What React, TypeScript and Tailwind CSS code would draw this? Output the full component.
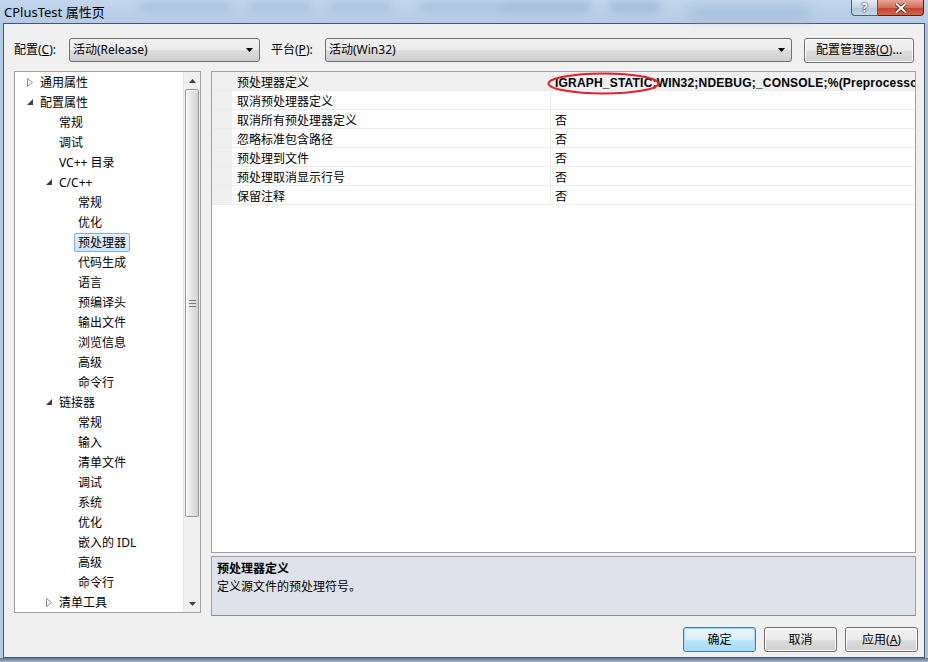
import React from "react";

const FONT = { fontFamily: '"Noto Sans","Noto Sans CJK SC",sans-serif' };

type Node = { label: string; level: number; arrow?: "open" | "closed"; selected?: boolean };

const tree: Node[] = [
  { label: "通用属性", level: 0, arrow: "closed" },
  { label: "配置属性", level: 0, arrow: "open" },
  { label: "常规", level: 1 },
  { label: "调试", level: 1 },
  { label: "VC++ 目录", level: 1 },
  { label: "C/C++", level: 1, arrow: "open" },
  { label: "常规", level: 2 },
  { label: "优化", level: 2 },
  { label: "预处理器", level: 2, selected: true },
  { label: "代码生成", level: 2 },
  { label: "语言", level: 2 },
  { label: "预编译头", level: 2 },
  { label: "输出文件", level: 2 },
  { label: "浏览信息", level: 2 },
  { label: "高级", level: 2 },
  { label: "命令行", level: 2 },
  { label: "链接器", level: 1, arrow: "open" },
  { label: "常规", level: 2 },
  { label: "输入", level: 2 },
  { label: "清单文件", level: 2 },
  { label: "调试", level: 2 },
  { label: "系统", level: 2 },
  { label: "优化", level: 2 },
  { label: "嵌入的 IDL", level: 2 },
  { label: "高级", level: 2 },
  { label: "命令行", level: 2 },
  { label: "清单工具", level: 1, arrow: "closed" },
];

const props: [string, string][] = [
  ["预处理器定义", "IGRAPH_STATIC;WIN32;NDEBUG;_CONSOLE;%(PreprocessorDefinitions)"],
  ["取消预处理器定义", ""],
  ["取消所有预处理器定义", "否"],
  ["忽略标准包含路径", "否"],
  ["预处理到文件", "否"],
  ["预处理取消显示行号", "否"],
  ["保留注释", "否"],
];

function DropArrow() {
  return (
    <svg width="7" height="4" viewBox="0 0 7 4">
      <path d="M0 0H7L3.5 4Z" fill="#000" />
    </svg>
  );
}

function Combo({ w, text }: { w: string; text: string }) {
  return (
    <div
      className={`${w} h-[24px] flex items-center justify-between rounded-[3px] border border-[#707070] pl-[3px] pr-[6px] bg-[linear-gradient(#f2f2f2_0%,#ebebeb_50%,#dddddd_51%,#cfcfcf_100%)]`}
    >
      <span>{text}</span>
      <DropArrow />
    </div>
  );
}

function Btn({ children, def, w }: { children: React.ReactNode; def?: boolean; w: string }) {
  return (
    <div
      className={`${w} h-[25px] flex items-center justify-center rounded-[3px] border ${
        def
          ? "border-[#3c7fb1] shadow-[inset_0_0_0_1px_#a9d9f5,inset_0_0_2px_1px_#bfe5fb] bg-[linear-gradient(#eaf6fd_0%,#d9f0fc_50%,#bee6fd_51%,#a7d9f5_100%)]"
          : "border-[#707070] bg-[linear-gradient(#f2f2f2_0%,#ebebeb_50%,#dddddd_51%,#cfcfcf_100%)] shadow-[inset_0_0_0_1px_#fcfcfc]"
      }`}
    >
      {children}
    </div>
  );
}

function TreeArrow({ kind }: { kind: "open" | "closed" }) {
  if (kind === "closed")
    return (
      <svg width="6" height="9" viewBox="0 0 6 9">
        <path d="M0.5 0.5L5.5 4.5L0.5 8.5Z" fill="#fff" stroke="#8c8c8c" strokeWidth="1" />
      </svg>
    );
  return (
    <svg width="6" height="6" viewBox="0 0 6 6">
      <path d="M6 0V6H0Z" fill="#3d3d3d" />
    </svg>
  );
}

function ScrollBar() {
  return (
    <div className="w-[17px] h-full flex flex-col bg-[#f0f0f0] border-l border-[#e5e5e5]">
      <div className="h-[17px] flex items-center justify-center">
        <svg width="7" height="4" viewBox="0 0 7 4">
          <path d="M0 4H7L3.5 0Z" fill="#404040" />
        </svg>
      </div>
      <div className="flex-1 flex flex-col px-px">
        <div className="h-[428px] rounded-[2px] border border-[#979797] bg-[linear-gradient(90deg,#f4f4f4,#e4e4e4_50%,#d2d2d2)] shadow-[inset_1px_1px_0_#fff] flex items-center justify-center">
          <div className="flex flex-col gap-[2px]">
            <div className="w-[7px] h-px bg-[#7a7a7a]" />
            <div className="w-[7px] h-px bg-[#7a7a7a]" />
            <div className="w-[7px] h-px bg-[#7a7a7a]" />
          </div>
        </div>
      </div>
      <div className="h-[17px] flex items-center justify-center">
        <svg width="7" height="4" viewBox="0 0 7 4">
          <path d="M0 0H7L3.5 4Z" fill="#404040" />
        </svg>
      </div>
    </div>
  );
}

export default function App() {
  return (
    <div
      style={FONT}
      className="w-[928px] h-[662px] overflow-hidden text-[12px] text-black flex flex-col bg-[linear-gradient(90deg,#b4cbe3,#c6d8ec_40%,#a9c2dc)] relative"
    >
      {/* title bar */}
      <div className="h-[23px] relative flex items-start bg-[linear-gradient(#c2d6ec,#b3cbe5)]">
        <div className="absolute left-[140px] top-[2px] w-[90px] h-[10px] bg-[#9fb8d4] blur-[4px] opacity-60" />
        <div className="absolute left-[250px] top-[2px] w-[60px] h-[10px] bg-[#9fb8d4] blur-[4px] opacity-60" />
        <div className="absolute left-[330px] top-[2px] w-[60px] h-[10px] bg-[#9fb8d4] blur-[4px] opacity-60" />
        <div className="absolute left-[420px] top-[2px] w-[80px] h-[10px] bg-[#9fb8d4] blur-[4px] opacity-60" />
        <div className="absolute left-[500px] top-[2px] w-[90px] h-[10px] bg-[#8eaacb] blur-[4px] opacity-60" />
        <div className="absolute left-[610px] top-[2px] w-[50px] h-[10px] bg-[#8eaacb] blur-[4px] opacity-60" />
        <div className="absolute left-[690px] top-[6px] w-[120px] h-[14px] bg-[#a2bcd9] blur-[6px] opacity-70" />
        <span className="relative ml-[4px] mt-[4px] text-[13px] leading-[16px]">CPlusTest 属性页</span>
        <div className="absolute right-[4px] top-0 flex">
          <div className="w-[27px] h-[16px] flex items-center justify-center rounded-bl-[4px] border border-t-0 border-[#4d5d73] bg-[linear-gradient(#e3ebf4,#c5d4e5_50%,#b2c5db_51%,#c5d6e8)] text-[12px] font-bold text-white leading-none [text-shadow:0_0_2px_#1c2a3c,0_0_1px_#1c2a3c]">
            ?
          </div>
          <div className="w-[46px] h-[16px] flex items-center justify-center rounded-br-[4px] border border-t-0 border-l-0 border-[#4d2218] bg-[linear-gradient(#e8a493,#d66f5a_50%,#c4402a_51%,#d7654b)]">
            <svg width="12" height="10" viewBox="0 0 12 10">
              <path d="M1.5 1L10.5 9M10.5 1L1.5 9" stroke="#3a1a14" strokeWidth="3.4" strokeLinecap="square" />
              <path d="M1.5 1L10.5 9M10.5 1L1.5 9" stroke="#fff" strokeWidth="2" strokeLinecap="square" />
            </svg>
          </div>
        </div>
      </div>

      <div className="flex">
        <div className="w-[3px]" />
        {/* dialog body */}
        <div className="w-[922px] h-[635px] border border-[#4a5664] bg-[#f0f0f0] flex flex-col">
          {/* toolbar */}
          <div className="mt-[14px] h-[24px] pl-[10px] flex items-center">
            <span className="w-[55px]">
              配置(<span className="underline">C</span>):
            </span>
            <Combo w="w-[191px]" text="活动(Release)" />
            <span className="ml-[11px] w-[54px]">
              平台(<span className="underline">P</span>):
            </span>
            <Combo w="w-[467px]" text="活动(Win32)" />
            <div className="ml-[12px]">
              <Btn w="w-[110px]">
                配置管理器(<span className="underline">O</span>)...
              </Btn>
            </div>
          </div>

          {/* main */}
          <div className="mt-[9px] pl-[10px] flex">
            {/* tree */}
            <div className="w-[187px] h-[542px] border border-[#a0a0a0] bg-white flex">
              <div className="flex-1 flex flex-col">
                {tree.map((n, i) => (
                  <div key={i} className="h-[20px] pt-[1px] flex items-center relative">
                    {n.arrow && (
                      <div
                        className={`absolute flex items-center ${
                          n.level === 0 ? "left-[12px]" : "left-[31px]"
                        } top-0 h-[20px]`}
                      >
                        <TreeArrow kind={n.arrow} />
                      </div>
                    )}
                    <span
                      className={`${
                        n.level === 0 ? "ml-[25px]" : n.level === 1 ? "ml-[44px]" : "ml-[59px]"
                      } ${
                        n.selected
                          ? "px-[3px] h-[19px] flex items-center rounded-[2px] border border-[#84acdd] bg-[linear-gradient(#e6f0fb,#cfe3fa)]"
                          : n.level === 2
                          ? "px-[4px]"
                          : ""
                      } whitespace-nowrap`}
                    >
                      {n.label}
                    </span>
                  </div>
                ))}
              </div>
              <ScrollBar />
            </div>

            {/* right column */}
            <div className="ml-[10px] w-[705px] flex flex-col">
              <div className="h-[482px] border border-[#a0a0a0] bg-white flex flex-col relative">
                {props.map(([k, v], i) => (
                  <div
                    key={i}
                    className={`h-[19px] flex border-b border-[#ececec] ${i === 0 ? "bg-[#f0f0f0]" : ""}`}
                  >
                    <div className="w-[20px] bg-[#f0f0f0]" />
                    <div className="w-[319px] pl-[5px] pt-[3px] flex items-center border-r border-[#ececec] whitespace-nowrap">
                      {k}
                    </div>
                    <div
                      className={`flex-1 pl-[4px] pt-[3px] flex items-center whitespace-nowrap overflow-hidden ${
                        i === 0 ? "font-bold tracking-[0.2px]" : ""
                      }`}
                      style={i === 0 ? { fontFamily: '"Liberation Sans",Arial,sans-serif' } : undefined}
                    >
                      {v}
                    </div>
                  </div>
                ))}
                {/* red annotation ellipse */}
                <svg
                  className="absolute left-[335px] top-[0px]"
                  width="113"
                  height="23"
                  viewBox="0 0 113 23"
                >
                  <ellipse cx="56.5" cy="11.5" rx="55" ry="10" fill="none" stroke="#e0202a" strokeWidth="2" />
                </svg>
              </div>
              <div className="mt-[3px] h-[60px] border border-[#a0a0a0] border-b-[#8c8c8c] bg-[#dfe2ea] px-[5px] pt-[3px] flex flex-col">
                <span className="font-bold leading-[18px]">预处理器定义</span>
                <span className="leading-[18px]">定义源文件的预处理符号。</span>
              </div>
            </div>
          </div>

          {/* buttons */}
          <div className="mt-[11px] pr-[6px] flex justify-end gap-[8px]">
            <Btn w="w-[73px]" def>
              确定
            </Btn>
            <Btn w="w-[73px]">取消</Btn>
            <Btn w="w-[73px]">
              应用(<span className="underline">A</span>)
            </Btn>
          </div>
        </div>
        <div className="w-[3px]" />
      </div>
      <div className="flex-1 bg-[linear-gradient(#5d7590,#9db6d2)]" />
    </div>
  );
}
